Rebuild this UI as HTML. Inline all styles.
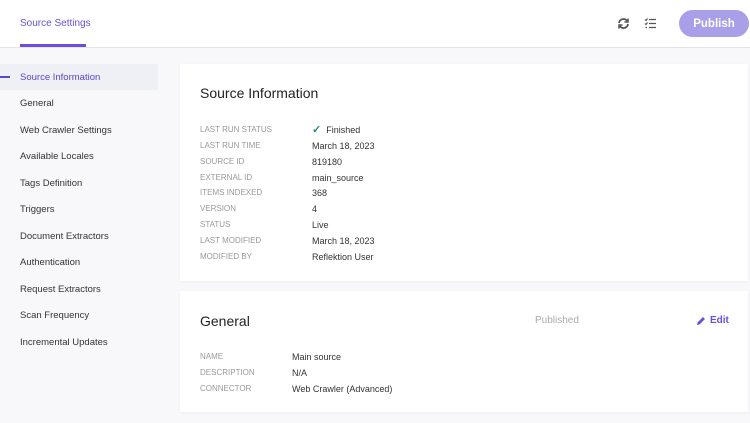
<!DOCTYPE html>
<html><head><style>
*{margin:0;padding:0;box-sizing:border-box}
body{width:750px;height:423px;overflow:hidden;background:#f8f8fb;font-family:"Liberation Sans",sans-serif;position:relative;color:#333}
.hdr{position:absolute;left:0;top:0;width:750px;height:48px;background:#fff;border-bottom:1px solid #e6e6ea}
.tab{position:absolute;left:20px;top:18px;font-size:10px;color:#6b4fd8}
.tabline{position:absolute;left:20px;top:44px;width:66px;height:3px;background:#6b4fd8}
.pub{position:absolute;left:679px;top:10px;width:70px;height:27px;border-radius:14px;background:#a99ee8;color:#fff;font-weight:bold;font-size:11.5px;text-align:center;line-height:28px}
.nav{position:absolute;left:0;font-size:9.5px;color:#333;width:158px;height:26px;line-height:27px;padding-left:20px}
.nav.act{background:#efeff6;color:#5b45c8}
.bar{position:absolute;left:0;top:76px;width:10px;height:2px;background:#5b45c8}
.card{position:absolute;left:180px;width:568px;background:#fff;box-shadow:0 1px 3px rgba(0,0,0,.04)}
h2{position:absolute;left:20px;font-size:14px;font-weight:normal;color:#222}
.row{position:absolute;left:20px;font-size:9px;height:16px;line-height:16px;width:500px}
.row .l{position:absolute;left:0;color:#999;font-size:8px}
.row .v{position:absolute;color:#333}
</style></head><body>
<div class="hdr">
<div class="tab">Source Settings</div><div class="tabline"></div>
<svg style="position:absolute;left:617px;top:17px" width="13" height="13" viewBox="0 0 13 13" fill="none" stroke="#555" stroke-width="1.8"><path d="M2 6 A4.5 4.5 0 0 1 10.5 4.5"/><path d="M11 7 A4.5 4.5 0 0 1 2.5 8.5"/><path d="M11 1.5v3.5h-3.5" stroke-width="1.5"/><path d="M2 11.5v-3.5h3.5" stroke-width="1.5"/></svg>
<svg style="position:absolute;left:644px;top:17px" width="13" height="13" viewBox="0 0 13 13" stroke="#555" stroke-width="1.2" fill="none"><path d="M1 2.5l1 1 1.5-2M5 2.5h7M1 6.5l1 1 1.5-2M5 6.5h7M5 10.5h7M1.5 10.5h1.5"/></svg>
<div class="pub">Publish</div>
</div>
<div class="nav act" style="top:64px">Source Information</div><div class="bar"></div>
<div class="nav" style="top:90px">General</div>
<div class="nav" style="top:117px">Web Crawler Settings</div>
<div class="nav" style="top:143px">Available Locales</div>
<div class="nav" style="top:170px">Tags Definition</div>
<div class="nav" style="top:196px">Triggers</div>
<div class="nav" style="top:223px">Document Extractors</div>
<div class="nav" style="top:249px">Authentication</div>
<div class="nav" style="top:276px">Request Extractors</div>
<div class="nav" style="top:302px">Scan Frequency</div>
<div class="nav" style="top:329px">Incremental Updates</div>

<div class="card" style="top:64px;height:217px">
<h2 style="top:21px">Source Information</h2>
<div class="row" style="top:58px"><span class="l">LAST RUN STATUS</span><span class="v" style="left:112px"><span style="color:#2a8a7a;font-weight:bold;font-size:11px">✓</span>&nbsp; Finished</span></div>
<div class="row" style="top:74px"><span class="l">LAST RUN TIME</span><span class="v" style="left:112px">March 18, 2023</span></div>
<div class="row" style="top:90px"><span class="l">SOURCE ID</span><span class="v" style="left:112px">819180</span></div>
<div class="row" style="top:106px"><span class="l">EXTERNAL ID</span><span class="v" style="left:112px">main_source</span></div>
<div class="row" style="top:121px"><span class="l">ITEMS INDEXED</span><span class="v" style="left:112px">368</span></div>
<div class="row" style="top:137px"><span class="l">VERSION</span><span class="v" style="left:112px">4</span></div>
<div class="row" style="top:153px"><span class="l">STATUS</span><span class="v" style="left:112px">Live</span></div>
<div class="row" style="top:169px"><span class="l">LAST MODIFIED</span><span class="v" style="left:112px">March 18, 2023</span></div>
<div class="row" style="top:185px"><span class="l">MODIFIED BY</span><span class="v" style="left:112px">Reflektion User</span></div>
</div>

<div class="card" style="top:291px;height:121px">
<h2 style="top:22px">General</h2>
<div style="position:absolute;left:355px;top:24px;font-size:10px;color:#aaa">Published</div>
<svg style="position:absolute;left:516px;top:25px" width="10" height="10" viewBox="0 0 10 10"><path d="M1 9l.5-2.5L7 1l2 2-5.5 5.5z" fill="#6b4fd8"/></svg>
<div style="position:absolute;left:530px;top:24px;font-size:10px;font-weight:bold;color:#6b4fd8">Edit</div>
<div class="row" style="top:58px"><span class="l">NAME</span><span class="v" style="left:92px">Main source</span></div>
<div class="row" style="top:74px"><span class="l">DESCRIPTION</span><span class="v" style="left:92px">N/A</span></div>
<div class="row" style="top:90px"><span class="l">CONNECTOR</span><span class="v" style="left:92px">Web Crawler (Advanced)</span></div>
</div>
</body></html>
